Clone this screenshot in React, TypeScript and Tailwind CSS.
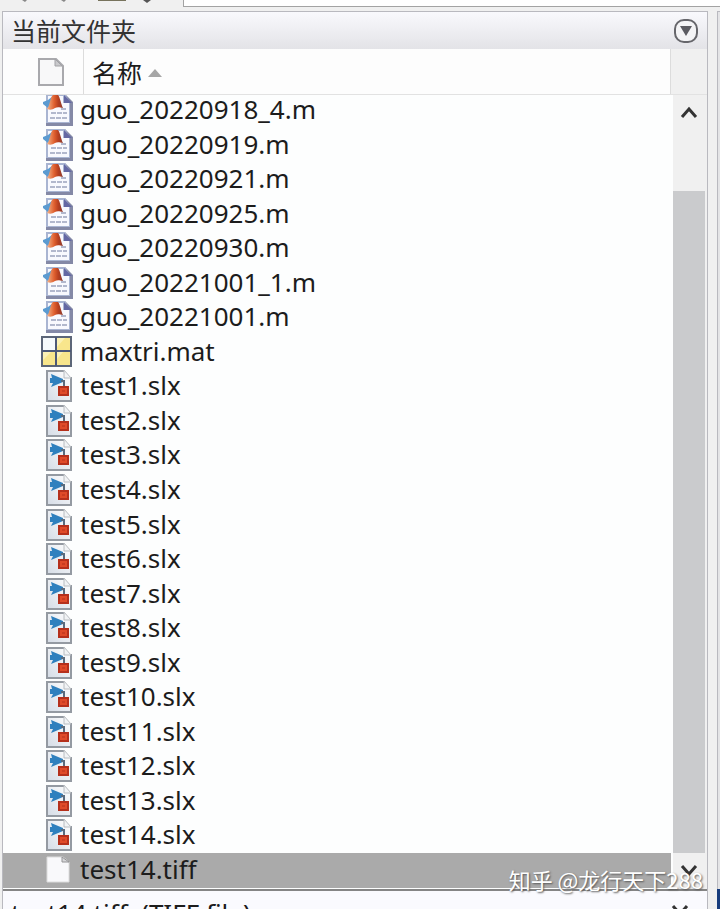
import { useState } from "react";

type FileKind = "m" | "mat" | "slx" | "tiff";

type FileItem = {
  name: string;
  kind: FileKind;
};

const files: FileItem[] = [
  { name: "guo_20220918_4.m", kind: "m" },
  { name: "guo_20220919.m", kind: "m" },
  { name: "guo_20220921.m", kind: "m" },
  { name: "guo_20220925.m", kind: "m" },
  { name: "guo_20220930.m", kind: "m" },
  { name: "guo_20221001_1.m", kind: "m" },
  { name: "guo_20221001.m", kind: "m" },
  { name: "maxtri.mat", kind: "mat" },
  { name: "test1.slx", kind: "slx" },
  { name: "test2.slx", kind: "slx" },
  { name: "test3.slx", kind: "slx" },
  { name: "test4.slx", kind: "slx" },
  { name: "test5.slx", kind: "slx" },
  { name: "test6.slx", kind: "slx" },
  { name: "test7.slx", kind: "slx" },
  { name: "test8.slx", kind: "slx" },
  { name: "test9.slx", kind: "slx" },
  { name: "test10.slx", kind: "slx" },
  { name: "test11.slx", kind: "slx" },
  { name: "test12.slx", kind: "slx" },
  { name: "test13.slx", kind: "slx" },
  { name: "test14.slx", kind: "slx" },
  { name: "test14.tiff", kind: "tiff" },
];

const ScriptIcon = () => (
  <svg width="32" height="32" viewBox="0 0 32 32" aria-hidden="true">
    <defs>
      <linearGradient id="flame" x1="0" x2="1">
        <stop offset="0" stopColor="#f2b48a" />
        <stop offset="0.45" stopColor="#e0602f" />
        <stop offset="0.7" stopColor="#b8401f" />
        <stop offset="1" stopColor="#8a3a30" />
      </linearGradient>
    </defs>
    <path d="M4 0h19l8 8v24H4z" fill="#8489a6" />
    <path d="M4 0h19l5 8v21H4z" fill="#a9b5d2" />
    <path d="M6 2h15v7h6v19H6z" fill="#f8f9fe" />
    <path d="M22 1l8 8h-8z" fill="#6468a3" />
    <path d="M19 15h6M9 19h16M8 24h17" stroke="#b2b8cd" strokeWidth="2" strokeDasharray="5 1" />
    <path d="M1 8l5-2 5-4 2 1-3 9-4 2-5-4z" fill="#5b9bd1" />
    <path d="M5 15c3-3 3-12 6-14h5c2 2 3 9 5 13-4-1-6-1-8 0-3 2-5 2-8 1z" fill="url(#flame)" />
  </svg>
);

const MatIcon = () => (
  <svg width="32" height="32" viewBox="0 1 32 32" aria-hidden="true">
    <rect x="2" y="2" width="29" height="29" fill="#f8e68c" stroke="#5c6678" strokeWidth="2" />
    <path d="M3 3h12v12H3z" fill="#f5f9fc" />
    <path d="M17 3h8l-8 9zM3 17h8l-8 8zM17 17h6l-6 7z" fill="#fbf1b5" />
    <path d="M16 2v29M2 16h29" stroke="#4c5878" strokeWidth="2" />
  </svg>
);

const ModelIcon = () => (
  <svg width="32" height="32" viewBox="0 0 32 32" aria-hidden="true">
    <defs>
      <linearGradient id="sheet" x1="1" y1="0" x2="0" y2="1">
        <stop offset="0" stopColor="#ffffff" />
        <stop offset="1" stopColor="#d5dce6" />
      </linearGradient>
    </defs>
    <path d="M5 1h18l6 6v24H5z" fill="url(#sheet)" />
    <path d="M22 1H5v30h24V7" fill="none" stroke="#949aa2" strokeWidth="2" />
    <path d="M22 0v8h7z" fill="#f1f3f5" stroke="#b8bcc0" />
    <path d="M9 4l12 5v3L9 17l2-4H8V8h2z" fill="#2f80be" />
    <path d="M19 11h3v6" fill="none" stroke="#5a6b7d" strokeWidth="2" />
    <rect x="17" y="17" width="9" height="8" fill="#df4a29" stroke="#b5301c" strokeWidth="2" />
    <path d="M20 21h3" stroke="#b5301c" strokeWidth="1" />
  </svg>
);

const BlankIcon = () => (
  <svg width="32" height="32" viewBox="0 0 32 32" aria-hidden="true">
    <path d="M5 3h16l6 5v20H5z" fill="#f9f9fb" stroke="#dcdcdc" />
    <path d="M20 3v5h7z" fill="#d8d8da" stroke="#949496" />
  </svg>
);

const icons = {
  m: ScriptIcon,
  mat: MatIcon,
  slx: ModelIcon,
  tiff: BlankIcon,
};

const Chevron = ({ down = false }: { down?: boolean }) => (
  <svg width="18" height="16" viewBox="0 0 18 16" fill="none" stroke="#333" strokeWidth="3" aria-hidden="true">
    <path d={down ? "M2 3l7 8 7-8" : "M2 12l7-8 7 8"} />
  </svg>
);

const Toolbar = () => (
  <div className="flex h-[11px] shrink-0 bg-[#f0f0f0]">
    <svg className="w-[183px] shrink-0" height="6" viewBox="0 0 183 6" aria-hidden="true">
      <path d="M22 0h5l-2 2zM61 0h5l-2 2z" fill="#888" />
      <path d="M98 0h28v1H98z" fill="#77735c" />
      <path d="M143 0h8l-4 3z" fill="#555" />
    </svg>
    <div className="h-[7px] flex-1 border-b border-l border-[#a3a3a3] bg-white" />
  </div>
);

const TitleBar = () => (
  <div className="flex h-[37px] shrink-0 items-center justify-between bg-linear-to-b from-[#f9f9fd] to-[#e3e3e7] px-2">
    <h1 className="text-[25px] leading-8 text-[#333]">当前文件夹</h1>
    <button type="button" aria-label="菜单">
      <svg width="26" height="26" viewBox="0 0 26 26" aria-hidden="true">
        <rect x="2" y="2" width="22" height="22" rx="9" fill="#f4f4f6" stroke="#66666b" strokeWidth="2" />
        <path d="M7 8h12l-6 10z" fill="#5c5c62" />
      </svg>
    </button>
  </div>
);

const ColumnHeader = () => (
  <div className="flex h-[46px] shrink-0 border-b border-[#e2e2e2] bg-[#f0f0f0] pr-9">
    <div className="flex flex-1 border-r border-[#dcdcdc] bg-[#fdfdfd]">
      <div className="flex w-[81px] items-center justify-end border-r border-[#dcdcdc] pr-4">
        <svg width="32" height="32" viewBox="0 0 32 32" aria-hidden="true">
          <path d="M4 3h17l7 7v19H4z" fill="#f8f8f9" stroke="#a9a9ad" strokeWidth="2" />
          <path d="M20 3v7h7z" fill="#c9c9cc" stroke="#a2a2a6" />
        </svg>
      </div>
      <button type="button" className="flex items-center gap-[6px] pt-[2px] pl-2 text-[25px] leading-8 text-[#1c1c1c]">
        名称
        <svg width="14" height="8" viewBox="0 0 14 8" aria-hidden="true">
          <path d="M0 8l7-8 7 8z" fill="#a6a6a6" />
        </svg>
      </button>
    </div>
  </div>
);

export default function App() {
  const [selected, setSelected] = useState("test14.tiff");

  return (
    <div className="flex h-screen flex-col overflow-hidden bg-[#f0f0f0] font-['Noto_Sans','Noto_Sans_CJK_SC',sans-serif]">
      <Toolbar />
      <div className="flex min-h-0 flex-1">
        <main className="relative ml-[2px] flex min-w-0 flex-1 flex-col border border-b-0 border-[#b9b9bf]">
          <TitleBar />
          <ColumnHeader />
          <div className="flex min-h-0 flex-1 bg-[#fdfefe]">
            <div className="flex min-w-0 flex-1 flex-col justify-end overflow-hidden">
              <ul className="grid h-[795px] shrink-0 auto-rows-fr pb-px">
                {files.map((file) => {
                  const Icon = icons[file.kind];
                  return (
                    <li key={file.name} className="flex min-h-0">
                      <button
                        type="button"
                        onClick={() => setSelected(file.name)}
                        className={`flex flex-1 items-center pb-[2px] text-left text-[26px] leading-7 text-[#1c1c1c] ${
                          file.kind === "mat" ? "gap-2 pl-[37px]" : "gap-[6px] pl-[39px]"
                        } ${selected === file.name ? "bg-[#aaaaaa]" : ""}`}
                      >
                        <Icon />
                        <span className="pb-[2px]">{file.name}</span>
                      </button>
                    </li>
                  );
                })}
              </ul>
            </div>
            <div className="flex w-9 shrink-0 flex-col border-l-2 border-[#fdfefe] bg-[#f0f0f0] pr-[2px]">
              <button type="button" aria-label="向上滚动" className="flex h-9 shrink-0 items-center justify-center">
                <Chevron />
              </button>
              <div className="mt-[60px] flex-1 bg-[#cacbcd]" />
              <button type="button" aria-label="向下滚动" className="flex h-9 shrink-0 items-center justify-center">
                <Chevron down />
              </button>
            </div>
          </div>
          <footer className="flex h-5 shrink-0 justify-between overflow-hidden border-t-2 border-[#858585] bg-[#fafafe] pt-[6px] pr-[18px] pl-2 text-[26px] leading-8 whitespace-pre text-[#1c1c1c]">
            <span>test14.tiff  (TIFF file)</span>
            <span className="pt-[6px]">
              <Chevron down />
            </span>
          </footer>
          <p className="absolute right-1 bottom-[14px] font-['Noto_Sans_CJK_SC',sans-serif] text-[22px] leading-8 text-white [text-shadow:1px_1px_2px_#555]">
            知乎 @龙行天下288
          </p>
        </main>
        <aside className="flex w-3 shrink-0 flex-col pl-[9px]">
          <div className="flex-1 border-t border-l border-[#b9b9bf] bg-[#e4e4e6]" />
          <div className="h-5 bg-[#173c7c]" />
        </aside>
      </div>
    </div>
  );
}
